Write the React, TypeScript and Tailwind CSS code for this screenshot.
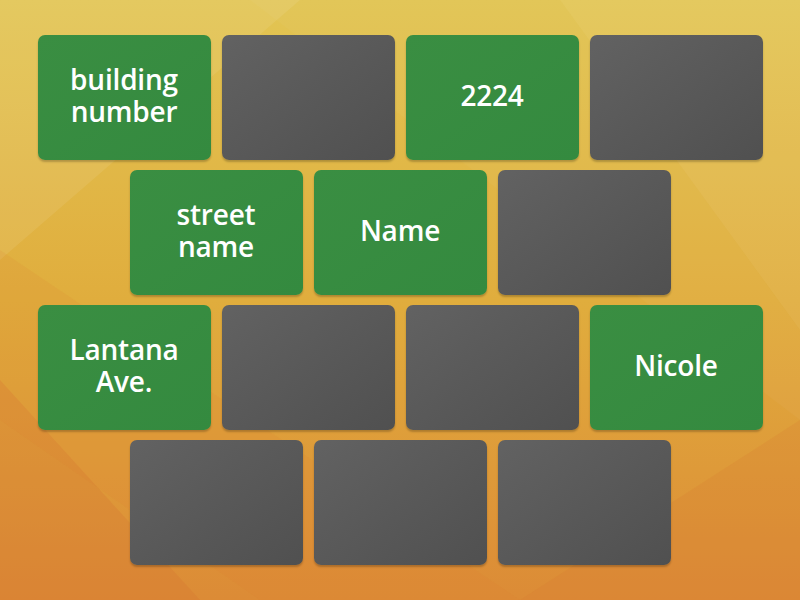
import React from "react"

type Card = { text?: string }

// rows of the memory board; cards with text are turned face up
const ROWS: Card[][] = [
  [{ text: "building number" }, {}, { text: "2224" }, {}],
  [{ text: "street name" }, { text: "Name" }, {}],
  [{ text: "Lantana Ave." }, {}, {}, { text: "Nicole" }],
  [{}, {}, {}],
]

function Tile({ card }: { card: Card }) {
  if (card.text) {
    return (
      <div className="w-[173px] h-[125px] rounded-[7px] bg-gradient-to-br from-[#3a8e42] to-[#348a3f] shadow-[0_2px_2px_rgba(0,0,0,0.22)] flex items-center justify-center px-4 pb-[6px] text-center">
        <span className="text-white font-semibold text-[28px] leading-[32px] tracking-[-0.2px]">
          {card.text}
        </span>
      </div>
    )
  }
  return (
    <div className="w-[173px] h-[125px] rounded-[7px] bg-gradient-to-br from-[#626262] to-[#505050] shadow-[0_2px_2px_rgba(0,0,0,0.22)]" />
  )
}

export default function App() {
  return (
    <div
      className="relative w-[800px] h-[600px] overflow-hidden bg-gradient-to-b from-[#e2c553] via-[#e0ad3d] to-[#dc8b36]"
      style={{ fontFamily: '"Open Sans", "Noto Sans", sans-serif' }}
    >
      {/* faceted background */}
      <svg className="absolute inset-0" width="800" height="600" viewBox="0 0 800 600">
        <polygon points="0,0 300,0 0,260" fill="#fff" opacity="0.08" />
        <polygon points="560,0 800,0 800,330" fill="#fff" opacity="0.07" />
        <polygon points="250,0 560,0 800,330 800,420" fill="#fff" opacity="0.03" />
        <polygon points="0,380 0,600 200,600" fill="#d4712e" opacity="0.25" />
        <polygon points="0,420 260,600 520,600 0,250" fill="#e07f33" opacity="0.12" />
        <polygon points="520,600 800,420 800,600" fill="#d77a32" opacity="0.2" />
      </svg>

      <div className="relative h-full flex flex-col items-center justify-center gap-[10px]">
        {ROWS.map((row, i) => (
          <div key={i} className="flex gap-[11px]">
            {row.map((card, j) => (
              <Tile key={j} card={card} />
            ))}
          </div>
        ))}
      </div>
    </div>
  )
}
